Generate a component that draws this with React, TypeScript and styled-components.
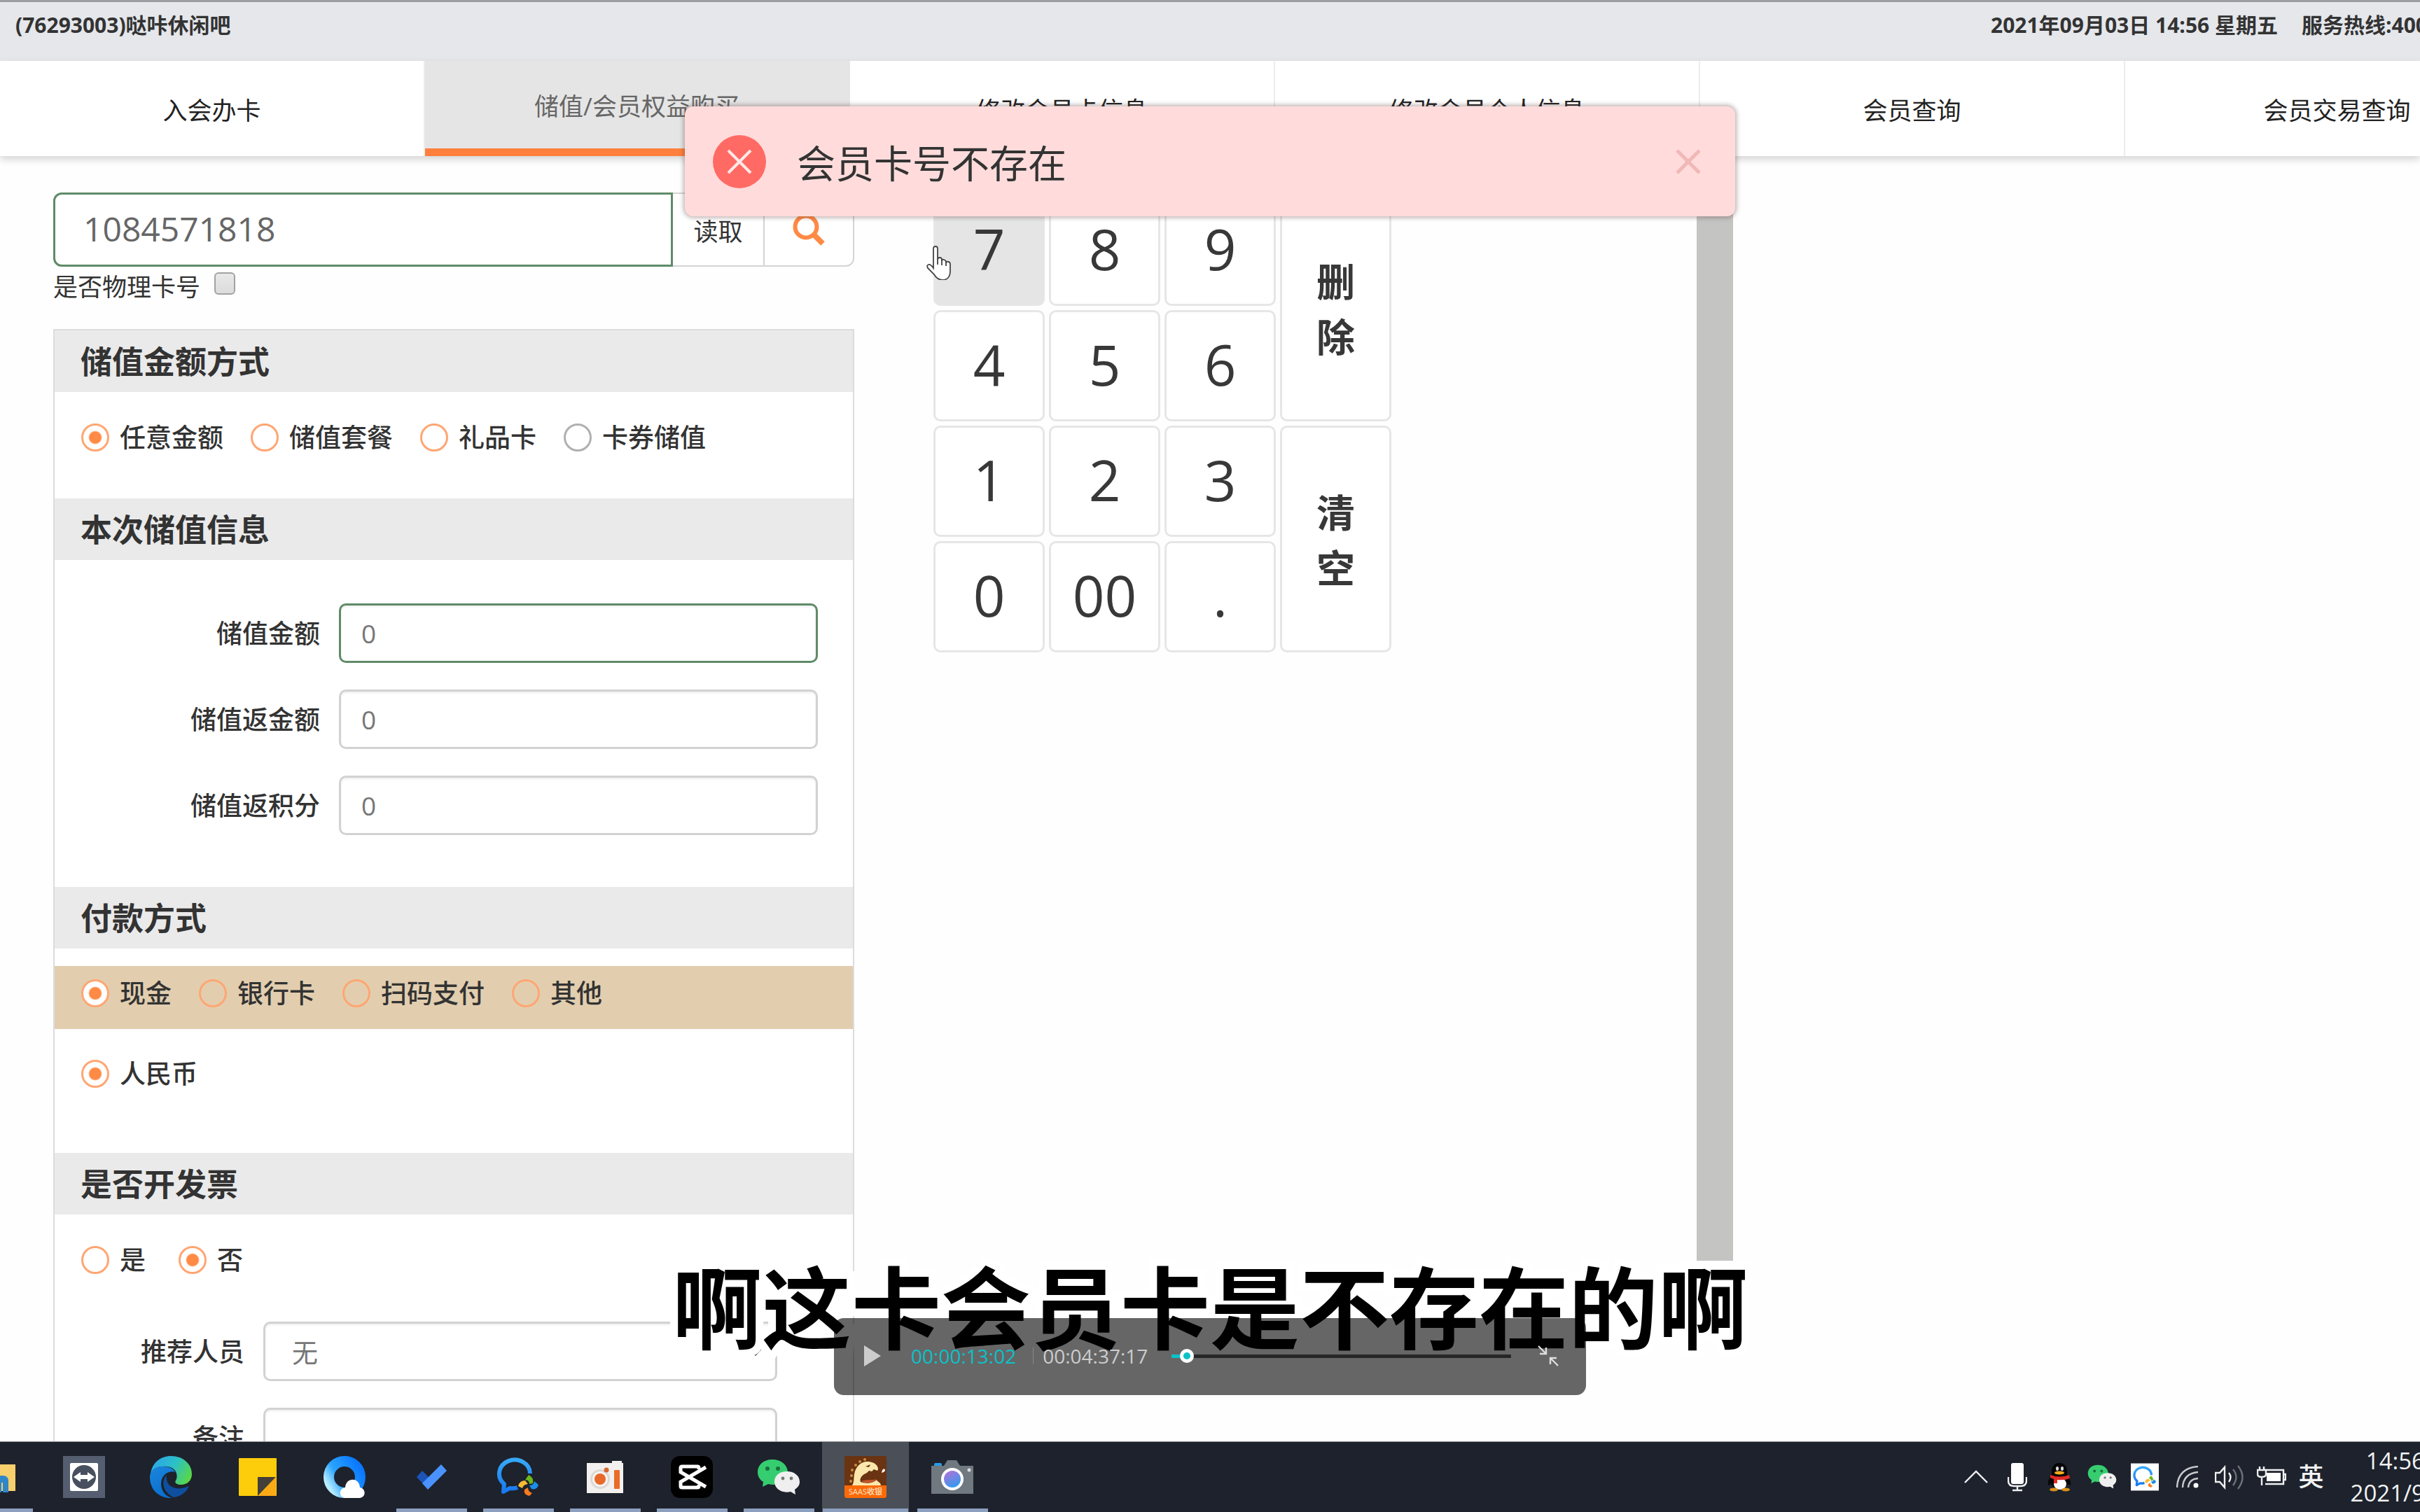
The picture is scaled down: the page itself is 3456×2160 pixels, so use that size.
import React from "react";
import styled, { createGlobalStyle } from "styled-components";

const ORANGE = "#ff8a45";
const LINE = "#dcdcdc";

const GlobalStyle = createGlobalStyle`
  * { box-sizing: border-box; }
  body { margin: 0; background: #fefefe; }
  body, button, input, select {
    font-family: "Open Sans", "Noto Sans CJK SC", sans-serif;
    color: #333;
  }
`;

/* ---------- page frame ---------- */

const Page = styled.div`
  position: relative;
  display: flex;
  flex-direction: column;
  height: 100vh;
  overflow: hidden;
`;

const TopBar = styled.header`
  display: flex;
  justify-content: space-between;
  flex: none;
  height: 87px;
  padding: 12px 0 0 22px;
  border-top: 3px solid #9c9da1;
  background: #e5e7eb;
  font-size: 30px;
  line-height: 42px;
  font-weight: 700;
  white-space: nowrap;
`;

const TopInfo = styled.div`
  display: flex;
  gap: 34px;
  margin-right: -11px;
`;

const Tabs = styled.nav`
  position: relative;
  z-index: 1;
  display: flex;
  flex: none;
  height: 136px;
  background: #fff;
  box-shadow: 0 5px 10px rgba(0, 0, 0, 0.16);
`;

const Tab = styled.a<{ $active?: boolean }>`
  display: flex;
  align-items: center;
  justify-content: center;
  flex: 1 0 607px;
  padding-top: 5px;
  border-right: 2px solid ${(p) => (p.$active ? "#e5e5e5" : "#ececec")};
  border-bottom: ${(p) => (p.$active ? "11px solid #ff803c" : "0")};
  background: ${(p) => (p.$active ? "#e5e5e5" : "#fff")};
  color: ${(p) => (p.$active ? "#666" : "#222")};
  font-size: 35px;
  line-height: 48px;
  text-decoration: none;
  white-space: nowrap;
`;

const Main = styled.main`
  display: grid;
  grid-template-columns: 1144fr 1203fr 52px 981fr;
  flex: 1;
  min-height: 0;
  padding: 52px 0 0 76px;
  overflow: hidden;
`;

const Divider = styled.div`
  height: 1526px;
  background: #c4c4c2;
`;

/* ---------- card search ---------- */

const SearchGroup = styled.form`
  display: flex;
  height: 106px;
`;

const CardInput = styled.input`
  flex: 1;
  min-width: 0;
  padding: 0 40px 4px;
  border: 3px solid #5f8b68;
  border-radius: 12px 0 0 12px;
  background: #fff;
  color: #666;
  font-size: 48px;
  outline: 0;
`;

const GroupButton = styled.button<{ $last?: boolean }>`
  display: flex;
  align-items: center;
  justify-content: center;
  width: ${(p) => (p.$last ? 128 : 131)}px;
  padding: 0;
  border: 2px solid #d4d4d4;
  border-left: 0;
  border-radius: ${(p) => (p.$last ? "0 12px 12px 0" : "0")};
  background: #fff;
  font-size: 35px;
`;

const PhysicalRow = styled.label`
  display: flex;
  align-items: center;
  gap: 20px;
  height: 58px;
  margin-bottom: 31px;
  font-size: 35px;
  line-height: 48px;
`;

const TickBox = styled.input`
  appearance: none;
  width: 30px;
  height: 32px;
  margin: 0 0 10px;
  border: 2px solid #a2a2a2;
  border-radius: 6px;
  background: linear-gradient(#e8e8e8, #dcdcdc);
`;

/* ---------- form panel ---------- */

const Panel = styled.div`
  border: 2px solid ${LINE};
  background: #fff;
`;

const SectionTitle = styled.h2`
  display: flex;
  align-items: center;
  height: 88px;
  margin: 0;
  padding: 2px 0 0 37px;
  background: #eaeaea;
  font-size: 45px;
  line-height: 60px;
  font-weight: 700;
`;

const SectionBody = styled.div<{ $pad: string }>`
  padding: ${(p) => p.$pad};
`;

const Choices = styled.div<{ $gap?: number; $band?: boolean }>`
  display: flex;
  align-items: center;
  gap: ${(p) => p.$gap ?? 39}px;
  height: ${(p) => (p.$band ? 90 : 42)}px;
  padding: ${(p) => (p.$band ? "0 38px 12px" : "0 38px")};
  background: ${(p) => (p.$band ? "#e2ceaf" : "transparent")};
`;

const Choice = styled.label`
  display: flex;
  align-items: center;
  gap: 15px;
  font-size: 37px;
  line-height: 42px;
  font-weight: 500;
  white-space: nowrap;
`;

const Radio = styled.input<{ $muted?: boolean }>`
  appearance: none;
  width: 40px;
  height: 40px;
  margin: 0;
  border: 3px solid ${(p) => (p.$muted ? "#b0b0b0" : "#ffa673")};
  border-radius: 50%;
  &:checked {
    background: radial-gradient(circle, ${ORANGE} 8px, #fff 10px);
  }
`;

const Fields = styled.div<{ $label: number; $end: number; $top: number }>`
  display: grid;
  grid-template-columns: ${(p) => p.$label}px minmax(0, 1fr);
  gap: 38px 27px;
  padding: ${(p) => p.$top}px ${(p) => p.$end}px 0 0;
`;

const FieldLabel = styled.label`
  align-self: center;
  font-size: 37px;
  line-height: 50px;
  font-weight: 500;
  text-align: right;
`;

const Field = styled.input<{ $valid?: boolean }>`
  width: 100%;
  height: 85px;
  padding: 0 29px;
  border: 3px solid ${(p) => (p.$valid ? "#5f8b68" : "#d2d2d2")};
  border-radius: 10px;
  background: #fff;
  box-shadow: inset 0 2px 3px rgba(0, 0, 0, 0.07);
  color: #777;
  font-size: 37px;
  outline: 0;
`;

const SelectShell = styled.div`
  display: grid;
  align-items: center;
  > * { grid-area: 1 / 1; }
  > svg { justify-self: end; margin-right: 22px; pointer-events: none; }
`;

const SelectField = styled.select`
  appearance: none;
  width: 100%;
  height: 85px;
  padding: 4px 38px 0;
  border: 3px solid #d2d2d2;
  border-radius: 10px;
  background: #fff;
  box-shadow: inset 0 2px 3px rgba(0, 0, 0, 0.07);
  color: #777;
  font-size: 37px;
`;

/* ---------- keypad ---------- */

const KeypadArea = styled.div`
  padding: 3px 0 0 113px;
`;

const Keypad = styled.div`
  display: grid;
  grid-template-columns: repeat(4, 159px);
  grid-auto-rows: 159px;
  gap: 6px;
`;

const Key = styled.button<{ $hover?: boolean }>`
  padding: 0 0 6px;
  border: 3px solid #e6e6e6;
  border-radius: 10px;
  background: ${(p) => (p.$hover ? "#e5e5e5" : "#fff")};
  color: #383838;
  font-size: 80px;
  line-height: 110px;
`;

const TallKey = styled(Key)<{ $row: number }>`
  grid-column: 4;
  grid-row: ${(p) => p.$row} / span 2;
  padding: 2px 49px 0;
  font-size: 55px;
  line-height: 79px;
  font-weight: 700;
`;

const Pointer = styled.svg`
  position: absolute;
  left: 1322px;
  top: 350px;
  z-index: 2;
  width: 38px;
  height: 50px;
`;

/* ---------- alert ---------- */

const Alert = styled.div`
  position: absolute;
  top: 152px;
  left: 50%;
  z-index: 3;
  display: flex;
  align-items: center;
  gap: 44px;
  width: 1500px;
  height: 157px;
  padding: 0 48px 0 40px;
  border-radius: 12px;
  background: #ffdcdb;
  box-shadow: 0 0 6px 2px rgba(90, 60, 60, 0.4);
  transform: translateX(-50%);
  font-size: 55px;
  line-height: 76px;
`;

const AlertText = styled.span`
  flex: 1;
  padding-top: 4px;
`;

const CloseButton = styled.button`
  display: flex;
  padding: 0;
  border: 0;
  background: none;
`;

/* ---------- subtitle and player ---------- */

const Caption = styled.div`
  position: absolute;
  right: 0;
  bottom: 204px;
  left: 0;
  z-index: 4;
  color: #000;
  font-family: "Noto Sans CJK SC", sans-serif;
  font-size: 128px;
  line-height: 186px;
  font-weight: 700;
  text-align: center;
  white-space: nowrap;
  -webkit-text-stroke: 22px #fff;
  paint-order: stroke fill;
`;

const Player = styled.div`
  position: absolute;
  bottom: 167px;
  left: 50%;
  z-index: 5;
  display: flex;
  align-items: center;
  width: 1074px;
  height: 110px;
  padding: 0 38px 2px 43px;
  border-radius: 14px;
  background: rgba(0, 0, 0, 0.6);
  transform: translateX(-50%);
  color: #ccc;
  font-size: 28px;
  line-height: 36px;
`;

const PlayerButton = styled.button`
  display: flex;
  padding: 0;
  border: 0;
  background: none;
`;

const Elapsed = styled.span`
  margin-left: 43px;
  padding-right: 24px;
  border-right: 1px solid #888;
  color: #0cc1c7;
  line-height: 24px;
`;

const Total = styled.span`
  margin: 0 34px 0 13px;
`;

const Seek = styled.input`
  appearance: none;
  flex: 1;
  min-width: 0;
  height: 20px;
  margin: 0 37px 0 0;
  background: linear-gradient(to right, #0cc1c7 16px, #262626 16px) center / 100% 5px no-repeat;
  &::-webkit-slider-thumb {
    appearance: none;
    width: 20px;
    height: 20px;
    border: 5px solid #fff;
    border-radius: 50%;
    background: #0cc1c7;
  }
`;

/* ---------- task bar ---------- */

const TaskBar = styled.footer`
  position: relative;
  z-index: 6;
  display: flex;
  justify-content: space-between;
  flex: none;
  height: 101px;
  border-top: 1px solid #8c9196;
  background: #1d222c;
`;

const Apps = styled.div`
  display: flex;
  margin-left: -66px;
`;

const TaskButton = styled.button<{ $open?: boolean; $active?: boolean }>`
  display: grid;
  grid-template-rows: 1fr 5px;
  justify-items: center;
  align-items: center;
  width: 124px;
  padding: 4px 1px 0;
  border: 0;
  background: ${(p) => (p.$active ? "#4a4f58" : "transparent")};
  &::after {
    content: "";
    width: ${(p) => (p.$active ? "100%" : "101px")};
    height: 5px;
    background: ${(p) => (p.$open ? "#8c9fbf" : "transparent")};
  }
`;

const Tray = styled.div`
  display: flex;
  align-items: center;
  margin-right: -7px;
  color: #f2f2f2;
`;

const TrayItem = styled.span<{ $w: number }>`
  display: flex;
  justify-content: center;
  width: ${(p) => p.$w}px;
`;

const Ime = styled.span`
  width: 74px;
  margin-left: 8px;
  font-size: 36px;
  line-height: 50px;
  font-weight: 500;
`;

const Clock = styled.div`
  font-size: 33px;
  line-height: 46px;
  text-align: right;
`;

/* ---------- drawings ---------- */

const FolderIcon = () => (
  <svg width="60" height="60" viewBox="0 0 60 60">
    <path d="M4 10h22l4 2h26v38H4z" fill="#f8cf6d" />
    <path d="M28 52V36q0-8 8-8h2q8 0 8 8v16h-8V38h-2v14z" fill="#3186c8" />
  </svg>
);

const TeamViewerIcon = () => (
  <svg width="60" height="60" viewBox="0 0 60 60">
    <rect width="60" height="60" fill="#555e70" />
    <rect x="10" y="10" width="40" height="40" rx="2" fill="#fff" />
    <circle cx="30" cy="30" r="17" fill="#48505f" />
    <path d="M15 30l10-7v4h10v-4l10 7-10 7v-4H25v4z" fill="#fff" />
  </svg>
);

const EdgeIcon = () => (
  <svg width="62" height="62" viewBox="0 0 62 62">
    <defs>
      <linearGradient id="edgeTop" x1="0" y1="0.3" x2="1" y2="0.7">
        <stop offset="0" stopColor="#2ca6e8" />
        <stop offset="0.5" stopColor="#2cc0c8" />
        <stop offset="1" stopColor="#5bd83f" />
      </linearGradient>
      <linearGradient id="edgeSide" x1="0" y1="0" x2="0.4" y2="1">
        <stop offset="0" stopColor="#1a86dc" />
        <stop offset="1" stopColor="#0b6fd0" />
      </linearGradient>
    </defs>
    <path d="M2 27C4 10 17 1 31 1c18 0 30 12 30 26 0 10-8 15-15 15-8 0-10-3-8-6 4-7 1-19-13-20C12 15 4 20 2 27z" fill="url(#edgeTop)" />
    <path d="M1 31c0-10 9-16 20-15 9 0 14 4 16 8-8-3-20 3-20 17 0 10 7 18 16 20C14 62 1 49 1 31z" fill="url(#edgeSide)" />
    <path d="M25 28c-7 7-8 23 10 32 9-1 17-6 21-14 1-2-1-2-2-1-13 6-32 1-29-17z" fill="#0f4fa0" />
  </svg>
);

const NoteIcon = () => (
  <svg width="54" height="54" viewBox="0 0 54 54">
    <rect width="54" height="54" rx="1" fill="#fdcd0b" />
    <path d="M27 27h26L27 54z" fill="#443f38" />
    <path d="M53 27v27H28z" fill="#fba915" />
  </svg>
);

const QBrowserIcon = () => (
  <svg width="62" height="62" viewBox="0 0 62 62">
    <defs>
      <linearGradient id="ring" x1="0" y1="0.8" x2="1" y2="0.2">
        <stop offset="0" stopColor="#b8ecff" />
        <stop offset="0.35" stopColor="#2ba4ff" />
        <stop offset="1" stopColor="#0a78ff" />
      </linearGradient>
    </defs>
    <circle cx="31" cy="31" r="22.5" fill="none" stroke="url(#ring)" strokeWidth="15" />
    <path d="M32 61c-9 0-10-14 0-15 1-15 20-15 21 0 9 1 9 15-1 15z" fill="#fff" />
  </svg>
);

const TodoIcon = () => (
  <svg width="46" height="38" viewBox="0 0 46 38">
    <path d="M2 19l8-9 16 16-8 10z" fill="#1c54b8" />
    <path d="M10 28L37 1l8 9-27 27z" fill="#4a93ff" />
  </svg>
);

const WeComArt = () => (
  <>
    <defs>
      <linearGradient id="wecom" x1="0" y1="1" x2="0" y2="0">
        <stop offset="0" stopColor="#1978f0" />
        <stop offset="1" stopColor="#36a8f8" />
      </linearGradient>
    </defs>
    <path d="M48 25A22 20 0 1 0 11 40l-1 11 9-5q6 1 11-1" fill="none" stroke="url(#wecom)" strokeWidth="6" strokeLinejoin="round" />
    <path d="M46 27q8 4 6 12l-5 1q0-6-6-6z" fill="#6cb81c" />
    <path d="M60 41q-2 8-10 6l-3-5q6 0 7-6z" fill="#1c8ee8" />
    <path d="M47 57q-9-2-7-9l5-3q0 6 6 8z" fill="#f97c1c" />
    <path d="M31 43q2-8 10-8l4 5q-7 1-8 6z" fill="#fbb834" />
  </>
);

const WeComIcon = () => (
  <svg width="62" height="60" viewBox="0 0 62 60"><WeComArt /></svg>
);

const WeComTrayIcon = () => (
  <svg width="40" height="40" viewBox="-5 -5 72 70">
    <rect x="-5" y="-5" width="72" height="70" fill="#fff" />
    <WeComArt />
  </svg>
);

const RecorderIcon = () => (
  <svg width="54" height="48" viewBox="0 0 54 48">
    <path d="M1 4h36V1h14v3h2v43H1z" fill="#f3f1ef" />
    <circle cx="20" cy="27" r="14" fill="#dcd9d6" />
    <circle cx="20" cy="27" r="11" fill="#f5f3f1" />
    <circle cx="20" cy="27" r="8" fill="#e8692a" />
    <circle cx="29" cy="14" r="3.5" fill="#d7692f" />
    <rect x="40" y="14" width="8" height="27" rx="1" fill="#ea6c28" />
  </svg>
);

const CapCutIcon = () => (
  <svg width="60" height="60" viewBox="0 0 60 60">
    <rect width="60" height="60" rx="13" fill="#000" />
    <path d="M50 16L14 37v6q0 2 2 2h22q2 0 2-2v-2M50 44L14 23v-6q0-2 2-2h22q2 0 2 2v2" fill="none" stroke="#fff" strokeWidth="5" />
  </svg>
);

const WeChatIcon = ({ size }: { size: number }) => (
  <svg width={size} height={(size * 52) / 62} viewBox="0 0 62 52">
    <path d="M22 1C9 1 1 9 1 19c0 6 3 11 8 14L8 40l8-4c18 4 29-6 28-18C43 8 34 1 22 1z" fill="#36cd70" />
    <circle cx="15" cy="14" r="3" fill="#1a6f3c" />
    <circle cx="30" cy="14" r="3" fill="#1a6f3c" />
    <path d="M43 18c-11 0-18 6-18 15s10 17 23 14l7 4-1-7c4-3 7-6 7-11 0-9-8-15-18-15z" fill="#efefef" />
    <circle cx="37" cy="28" r="2.4" fill="#777" />
    <circle cx="49" cy="28" r="2.4" fill="#777" />
  </svg>
);

const SaasIcon = () => (
  <svg width="60" height="60" viewBox="0 0 60 60">
    <rect width="60" height="60" rx="3" fill="#6a3312" />
    <g fill="#c98f3e">
      <circle cx="9" cy="36" r="2" />
      <circle cx="10" cy="28" r="2" />
      <circle cx="11" cy="20" r="2" />
      <circle cx="16" cy="13" r="2" />
      <circle cx="22" cy="8" r="2" />
      <circle cx="29" cy="5" r="2" />
    </g>
    <path d="M10 43c4-4 3-10 4-17C16 14 25 7 34 8c9 1 14 5 14 11l-1 2-5-2-3 3-4-1-3 3c-7 3-11 8-9 13 8 3 18 2 23-3 1 4 6 2 6 9z" fill="#fce8ad" />
    <path d="M24 36c9-3 17-1 22-3-5 6-15 7-22 3z" fill="#c4552a" />
    <path d="M30 15l7-3-2 4z" fill="#6a3312" />
    <path d="M54 20q4-4 4 1-2 3-5 3z" fill="#fff" />
    <path d="M0 42h60v15q0 3-3 3H3q-3 0-3-3z" fill="#fb6a08" />
    <text x="30" y="55" textAnchor="middle" fontSize="11" fontWeight="500" fill="#ffe2c8" fontFamily="Open Sans, Noto Sans CJK SC, sans-serif">SAAS收银</text>
  </svg>
);

const CameraIcon = () => (
  <svg width="62" height="50" viewBox="0 0 62 50">
    <defs>
      <linearGradient id="lens" x1="0.2" y1="0" x2="0.7" y2="1">
        <stop offset="0" stopColor="#b072d8" />
        <stop offset="1" stopColor="#2f9cf0" />
      </linearGradient>
    </defs>
    <rect x="5" y="5" width="11" height="8" rx="2" fill="#2a9be0" />
    <path d="M1 9h18l5-8h13l5 8h19v40H1z" fill="#707880" />
    <circle cx="31" cy="28" r="16" fill="#fff" />
    <circle cx="31" cy="28" r="12" fill="url(#lens)" />
    <circle cx="55" cy="15" r="2.5" fill="#ddd" />
  </svg>
);

const PenguinIcon = () => (
  <svg width="36" height="42" viewBox="0 0 36 42">
    <path d="M18 1c-8 0-11 6-11 12v5C4 22 1 27 2 32c1 2 3 0 4-2 1 9 23 9 24 0 1 2 3 4 4 2 1-5-2-10-5-14v-5C29 7 26 1 18 1z" fill="#060606" />
    <ellipse cx="19" cy="31" rx="9" ry="8" fill="#fff" />
    <ellipse cx="15" cy="9" rx="2" ry="3" fill="#ddd" />
    <ellipse cx="22" cy="9" rx="2" ry="3" fill="#ddd" />
    <ellipse cx="18" cy="15" rx="7" ry="2.5" fill="#f5a91b" />
    <path d="M5 18q13 5 27 0l1 5q-8 3-18 2v5h-5v-6l-5-2z" fill="#e22b26" />
    <ellipse cx="10" cy="39" rx="6" ry="2.5" fill="#d99018" />
    <ellipse cx="27" cy="39" rx="6" ry="2.5" fill="#d99018" />
  </svg>
);

const stroke = { fill: "none", stroke: "#f0f0f0", strokeWidth: 2.4 };

const UpIcon = () => (
  <svg width="34" height="20" viewBox="0 0 34 20"><path d="M1 18L17 2l16 16" {...stroke} /></svg>
);

const MicIcon = () => (
  <svg width="28" height="42" viewBox="0 0 28 42">
    <rect x="5" y="1" width="18" height="30" rx="3" fill="#fff" />
    <path d="M1 21v5q0 8 8 8h10q8 0 8-8v-5M14 34v6M7 40h14" {...stroke} />
  </svg>
);

const WifiIcon = () => (
  <svg width="32" height="32" viewBox="0 0 32 32">
    <path d="M1 31Q2 3 31 1M9 31Q10 11 31 9M17 31q1-12 14-13" fill="none" stroke="#c8cacd" strokeWidth="2.4" />
    <circle cx="28" cy="28" r="3.5" fill="#fff" />
  </svg>
);

const VolumeIcon = () => (
  <svg width="42" height="38" viewBox="0 0 42 38">
    <path d="M1 13h6l7-8v29l-7-8H1z" {...stroke} />
    <path d="M20 13q5 6 0 13" {...stroke} />
    <path d="M26 8q9 11 0 23M33 3q13 16 0 33" fill="none" stroke="#6d7178" strokeWidth="2.4" />
  </svg>
);

const BatteryIcon = () => (
  <svg width="42" height="32" viewBox="0 0 42 32">
    <path d="M12 6h26v20H12M38 12h3v8h-3" {...stroke} />
    <rect x="14" y="10" width="20" height="12" fill="#fff" />
    <path d="M1 6h12v6q0 4-6 4t-6-4zM4 6V1M10 6V1M7 16v12" {...stroke} fill="#1d222c" />
  </svg>
);

const SearchIcon = () => (
  <svg width="48" height="48" viewBox="0 0 48 48">
    <circle cx="20" cy="20" r="15.5" fill="none" stroke={ORANGE} strokeWidth="6" />
    <path d="M31 31l13 13" stroke={ORANGE} strokeWidth="8" />
  </svg>
);

const ErrorIcon = () => (
  <svg width="76" height="76" viewBox="0 0 76 76">
    <circle cx="38" cy="38" r="38" fill="#ff6b64" />
    <path d="M22 22l32 32M54 22L22 54" stroke="#ffe9e8" strokeWidth="4" />
  </svg>
);

/* ---------- content ---------- */

const tabs = ["入会办卡", "储值/会员权益购买", "修改会员卡信息", "修改会员个人信息", "会员查询", "会员交易查询"];
const keys = ["7", "8", "9", "4", "5", "6", "1", "2", "3", "0", "00", "."];

const RadioSet = ({
  name,
  items,
  checked,
  muted,
  gap,
  band,
}: {
  name: string;
  items: string[];
  checked: number;
  muted?: number;
  gap?: number;
  band?: boolean;
}) => (
  <Choices $gap={gap} $band={band}>
    {items.map((t, i) => (
      <Choice key={t}>
        <Radio type="radio" name={name} defaultChecked={i === checked} $muted={i === muted} />
        {t}
      </Choice>
    ))}
  </Choices>
);

export default function App() {
  return (
    <Page>
      <GlobalStyle />
      <TopBar>
        <span>(76293003)哒咔休闲吧</span>
        <TopInfo>
          <span>2021年09月03日 14:56 星期五</span>
          <span>服务热线:400</span>
        </TopInfo>
      </TopBar>

      <Tabs>
        {tabs.map((t, i) => (
          <Tab key={t} href="#" $active={i === 1}>{t}</Tab>
        ))}
      </Tabs>

      <Main>
        <div>
          <SearchGroup>
            <CardInput aria-label="会员卡号" defaultValue="1084571818" />
            <GroupButton type="button">读取</GroupButton>
            <GroupButton type="button" $last aria-label="查询"><SearchIcon /></GroupButton>
          </SearchGroup>
          <PhysicalRow>
            是否物理卡号
            <TickBox type="checkbox" />
          </PhysicalRow>

          <Panel>
            <SectionTitle>储值金额方式</SectionTitle>
            <SectionBody $pad="44px 0 66px">
              <RadioSet name="mode" items={["任意金额", "储值套餐", "礼品卡", "卡券储值"]} checked={0} muted={3} />
            </SectionBody>

            <SectionTitle>本次储值信息</SectionTitle>
            <SectionBody $pad="0 0 74px">
              <Fields $label={379} $end={50} $top={62}>
                <FieldLabel htmlFor="amount">储值金额</FieldLabel>
                <Field id="amount" defaultValue="0" $valid />
                <FieldLabel htmlFor="bonus">储值返金额</FieldLabel>
                <Field id="bonus" defaultValue="0" />
                <FieldLabel htmlFor="points">储值返积分</FieldLabel>
                <Field id="points" defaultValue="0" />
              </Fields>
            </SectionBody>

            <SectionTitle>付款方式</SectionTitle>
            <SectionBody $pad="25px 0 43px">
              <RadioSet name="pay" items={["现金", "银行卡", "扫码支付", "其他"]} checked={0} band />
            </SectionBody>
            <SectionBody $pad="0 0 92px">
              <RadioSet name="currency" items={["人民币"]} checked={0} />
            </SectionBody>

            <SectionTitle>是否开发票</SectionTitle>
            <SectionBody $pad="44px 0 44px">
              <RadioSet name="invoice" items={["是", "否"]} checked={1} gap={47} />
              <Fields $label={271} $end={108} $top={67}>
                <FieldLabel htmlFor="referrer">推荐人员</FieldLabel>
                <SelectShell>
                  <SelectField id="referrer" defaultValue="无">
                    <option>无</option>
                  </SelectField>
                  <svg width="18" height="12" viewBox="0 0 18 12">
                    <path d="M1 1l8 9 8-9" fill="none" stroke="#555" strokeWidth="3" />
                  </svg>
                </SelectShell>
                <FieldLabel htmlFor="remark">备注</FieldLabel>
                <Field id="remark" />
              </Fields>
            </SectionBody>
          </Panel>
        </div>

        <KeypadArea>
          <Keypad>
            <TallKey type="button" $row={1}>删除</TallKey>
            <TallKey type="button" $row={3}>清空</TallKey>
            {keys.map((k, i) => (
              <Key key={k} type="button" $hover={i === 0}>{k}</Key>
            ))}
          </Keypad>
        </KeypadArea>

        <Divider />
      </Main>

      <Pointer viewBox="0 0 38 50">
        <path
          d="M11 30V5q0-3 3-3t3 3v16q0-3 3-3t3 3v2q0-3 3-2t3 3v2q0-3 3-2 3 0 3 4v9c0 8-4 13-11 13-6 0-9-3-12-8L3 33q-2-4 1-5t7 5z"
          fill="#fff"
          stroke="#444"
          strokeWidth="1.8"
        />
        <path d="M17 20v8M23 21v8M29 24v6" stroke="#444" strokeWidth="1.8" />
      </Pointer>

      <Alert role="alert">
        <ErrorIcon />
        <AlertText>会员卡号不存在</AlertText>
        <CloseButton type="button" aria-label="关闭">
          <svg width="38" height="38" viewBox="0 0 38 38">
            <path d="M3 3l32 32M35 3L3 35" stroke="#f0b8b6" strokeWidth="5" />
          </svg>
        </CloseButton>
      </Alert>

      <Caption>啊这卡会员卡是不存在的啊</Caption>

      <Player>
        <PlayerButton type="button" aria-label="播放">
          <svg width="24" height="30" viewBox="0 0 24 30"><path d="M0 0l24 15L0 30z" fill="#ccc" /></svg>
        </PlayerButton>
        <Elapsed>00:00:13:02</Elapsed>
        <Total>00:04:37:17</Total>
        <Seek type="range" aria-label="进度" min={0} max={1000} defaultValue={26} />
        <PlayerButton type="button" aria-label="退出全屏">
          <svg width="32" height="32" viewBox="0 0 32 32">
            <path d="M2 2l11 11M13 4v9H4M30 30L19 19M19 28v-9h9" fill="none" stroke="#ddd" strokeWidth="2.4" />
          </svg>
        </PlayerButton>
      </Player>

      <TaskBar>
        <Apps>
          <TaskButton aria-label="文件" $open><FolderIcon /></TaskButton>
          <TaskButton aria-label="TeamViewer"><TeamViewerIcon /></TaskButton>
          <TaskButton aria-label="Edge"><EdgeIcon /></TaskButton>
          <TaskButton aria-label="便笺"><NoteIcon /></TaskButton>
          <TaskButton aria-label="浏览器"><QBrowserIcon /></TaskButton>
          <TaskButton aria-label="待办" $open><TodoIcon /></TaskButton>
          <TaskButton aria-label="企业微信" $open><WeComIcon /></TaskButton>
          <TaskButton aria-label="录屏" $open><RecorderIcon /></TaskButton>
          <TaskButton aria-label="剪映" $open><CapCutIcon /></TaskButton>
          <TaskButton aria-label="微信" $open><WeChatIcon size={62} /></TaskButton>
          <TaskButton aria-label="收银" $open $active><SaasIcon /></TaskButton>
          <TaskButton aria-label="相机" $open><CameraIcon /></TaskButton>
        </Apps>
        <Tray>
          <TrayItem $w={58}><UpIcon /></TrayItem>
          <TrayItem $w={60}><MicIcon /></TrayItem>
          <TrayItem $w={60}><PenguinIcon /></TrayItem>
          <TrayItem $w={62}><WeChatIcon size={42} /></TrayItem>
          <TrayItem $w={60}><WeComTrayIcon /></TrayItem>
          <TrayItem $w={62}><WifiIcon /></TrayItem>
          <TrayItem $w={58}><VolumeIcon /></TrayItem>
          <TrayItem $w={62}><BatteryIcon /></TrayItem>
          <Ime>英</Ime>
          <Clock>14:56<br />2021/9</Clock>
        </Tray>
      </TaskBar>
    </Page>
  );
}
